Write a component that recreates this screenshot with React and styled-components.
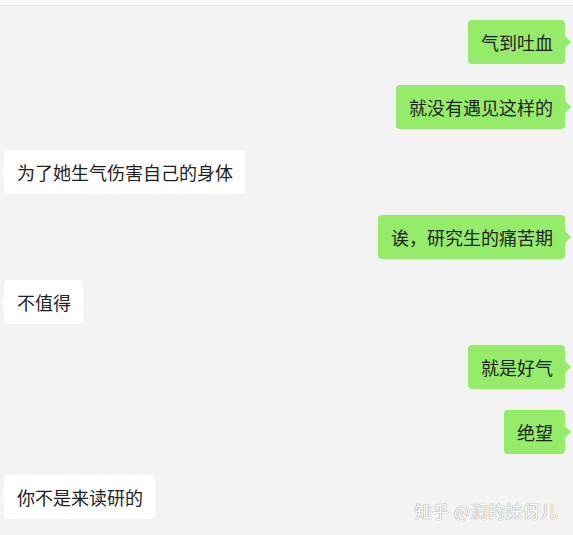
import React from 'react';
import styled, { createGlobalStyle, css } from 'styled-components';

const GlobalStyle = createGlobalStyle`
  html, body {
    margin: 0;
    padding: 0;
    background: #f3f3f3;
    overflow: hidden;
  }
  body {
    font-family: "Noto Sans CJK SC", "Noto Sans", sans-serif;
  }
`;

const Screen = styled.div`
  position: relative;
  width: 573px;
  height: 535px;
  background: #f3f3f3;
  overflow: hidden;
`;

const TopBar = styled.div`
  height: 5px;
  background: #f8f8f8;
  border-bottom: 1px solid #e6e6e6;
`;

const Messages = styled.div`
  display: flex;
  flex-direction: column;
  gap: 21px;
  padding: 14px 8px 0 4px;
`;

const Row = styled.div`
  display: flex;
  justify-content: ${p => (p.mine ? 'flex-end' : 'flex-start')};
`;

const mineStyles = css`
  background: #95ec69;
  &::after {
    right: -6px;
    border-width: 7px 0 7px 7px;
    border-color: transparent transparent transparent #95ec69;
  }
`;

const theirStyles = css`
  background: #ffffff;
  &::after {
    left: -4px;
    border-width: 7px 4px 7px 0;
    border-color: transparent #f9f9f9 transparent transparent;
  }
`;

const Bubble = styled.div`
  position: relative;
  height: 44px;
  box-sizing: border-box;
  padding: 0 12px 0 13px;
  display: flex;
  align-items: center;
  border-radius: 4px;
  font-size: 18px;
  line-height: 24px;
  color: #222222;
  white-space: nowrap;
  &::after {
    content: '';
    position: absolute;
    top: 50%;
    margin-top: -7px;
    width: 0;
    height: 0;
    border-style: solid;
  }
  ${p => (p.mine ? mineStyles : theirStyles)}
`;

const Watermark = styled.div`
  position: absolute;
  right: 15px;
  bottom: 13px;
  font-size: 17px;
  line-height: 22px;
  color: #ffffff;
  text-shadow: 0 0 1px #9a9a9a, 0 0 1px #9a9a9a;
  letter-spacing: 0.5px;
`;

const messages = [
  { text: '气到吐血', mine: true },
  { text: '就没有遇见这样的', mine: true },
  { text: '为了她生气伤害自己的身体', mine: false },
  { text: '诶，研究生的痛苦期', mine: true },
  { text: '不值得', mine: false },
  { text: '就是好气', mine: true },
  { text: '绝望', mine: true },
  { text: '你不是来读研的', mine: false },
];

export default function App() {
  return (
    <Screen>
      <GlobalStyle />
      <TopBar />
      <Messages>
        {messages.map((m, i) => (
          <Row key={i} mine={m.mine}>
            <Bubble mine={m.mine}>{m.text}</Bubble>
          </Row>
        ))}
      </Messages>
      <Watermark>知乎 @澜的妹伢儿</Watermark>
    </Screen>
  );
}
